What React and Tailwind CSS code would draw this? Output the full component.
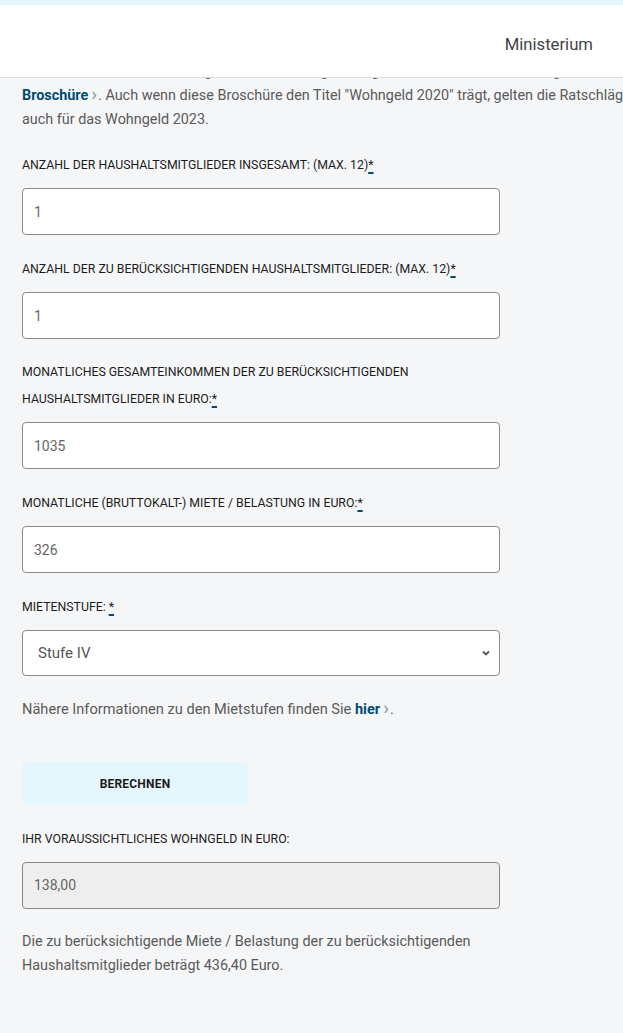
import React from "react";

const font = { fontFamily: "Roboto, 'Noto Sans', sans-serif" };

function Req() {
  return (
    <span className="underline decoration-[#004b76] decoration-2 underline-offset-[3px]">*</span>
  );
}

function Label({ children }) {
  return (
    <label className="block text-[12.3px] leading-[27px] uppercase text-[#1c1c1c] mb-[9px]">
      {children}
    </label>
  );
}

function Field({ label, value, className = "" }) {
  return (
    <div className={className}>
      <Label>{label}</Label>
      <input
        readOnly
        value={value}
        className="block w-[478px] h-[47px] rounded-[4px] border border-[#8a8a8a] bg-white px-[11px] text-[14px] text-[#666] outline-none"
      />
    </div>
  );
}

function Chev() {
  return (
    <span className="text-[#9aa4ab] text-[19px] leading-none ml-[3px] mr-[1px] font-semibold">
      {"\u203A"}
    </span>
  );
}

export default function App() {
  return (
    <div className="w-full min-h-[1033px] overflow-hidden bg-[#f5f6f8]" style={font}>
      <header className="fixed top-0 left-0 right-0 z-10">
        <div className="h-[5px] bg-[#e6f6fd]" />
        <div className="h-[73px] bg-white border-b border-[#dedfe1] flex items-center justify-end pr-[30px] pt-[7px]">
          <span className="text-[16.7px] text-[#444]">Ministerium</span>
        </div>
      </header>

      <main className="pt-[60px] px-[22px] pb-[40px]">
        <p className="w-[760px] whitespace-nowrap text-[14.4px] leading-[24px] text-[#5a5a5a]">
          Weitere Hinweise zum Wohngeld und zur Antragstellung finden Sie in unserer Wohngeld-
          <br />
          <span className="font-bold text-[#004b76]">Broschüre</span>
          <Chev />. Auch wenn diese Broschüre den Titel "Wohngeld 2020" trägt, gelten die Ratschläge
          <br />
          auch für das Wohngeld 2023.
        </p>

        <div className="mt-[20px]">
          <Field
            label={<>Anzahl der Haushaltsmitglieder insgesamt: (max. 12)<Req /></>}
            value="1"
          />
          <Field
            className="mt-[21px]"
            label={<>Anzahl der zu berücksichtigenden Haushaltsmitglieder: (max. 12)<Req /></>}
            value="1"
          />
          <Field
            className="mt-[20px]"
            label={<>Monatliches Gesamteinkommen der zu berücksichtigenden<br />Haushaltsmitglieder in Euro:<Req /></>}
            value="1035"
          />
          <Field
            className="mt-[21px]"
            label={<>Monatliche (Bruttokalt-) Miete / Belastung in Euro:<Req /></>}
            value="326"
          />

          <div className="mt-[21px]">
            <Label>Mietenstufe: <Req /></Label>
            <div className="relative w-[478px] h-[46px] rounded-[4px] border border-[#8a8a8a] bg-white flex items-center px-[15px]">
              <span className="text-[15px] text-[#555]">Stufe IV</span>
              <svg
                className="absolute right-[8px] top-1/2 -translate-y-1/2"
                width="10"
                height="10"
                viewBox="0 0 10 10"
                fill="none"
                stroke="#555"
                strokeWidth="1.8"
              >
                <path d="M2 3.5 L5 6.5 L8 3.5" />
              </svg>
            </div>
          </div>

          <p className="mt-[21px] text-[14.6px] leading-[24px] text-[#5a5a5a]">
            Nähere Informationen zu den Mietstufen finden Sie{" "}
            <span className="font-bold text-[#004b76]">hier</span>
            <Chev />.
          </p>

          <button className="mt-[41px] w-[226px] h-[43px] rounded-[4px] bg-[#e6f6fd] text-[12px] font-bold text-[#1c1c1c] tracking-[0.2px]">
            BERECHNEN
          </button>

          <div className="mt-[21px]">
            <Label>Ihr voraussichtliches Wohngeld in Euro:</Label>
            <div className="w-[478px] h-[47px] rounded-[4px] border border-[#8a8a8a] bg-[#eeeeee] flex items-center px-[11px] text-[14px] text-[#666]">
              138,00
            </div>
          </div>

          <p className="mt-[21px] w-[478px] text-[14.4px] leading-[24px] text-[#5a5a5a]">
            Die zu berücksichtigende Miete / Belastung der zu berücksichtigenden Haushaltsmitglieder beträgt 436,40 Euro.
          </p>
        </div>
      </main>
    </div>
  );
}
